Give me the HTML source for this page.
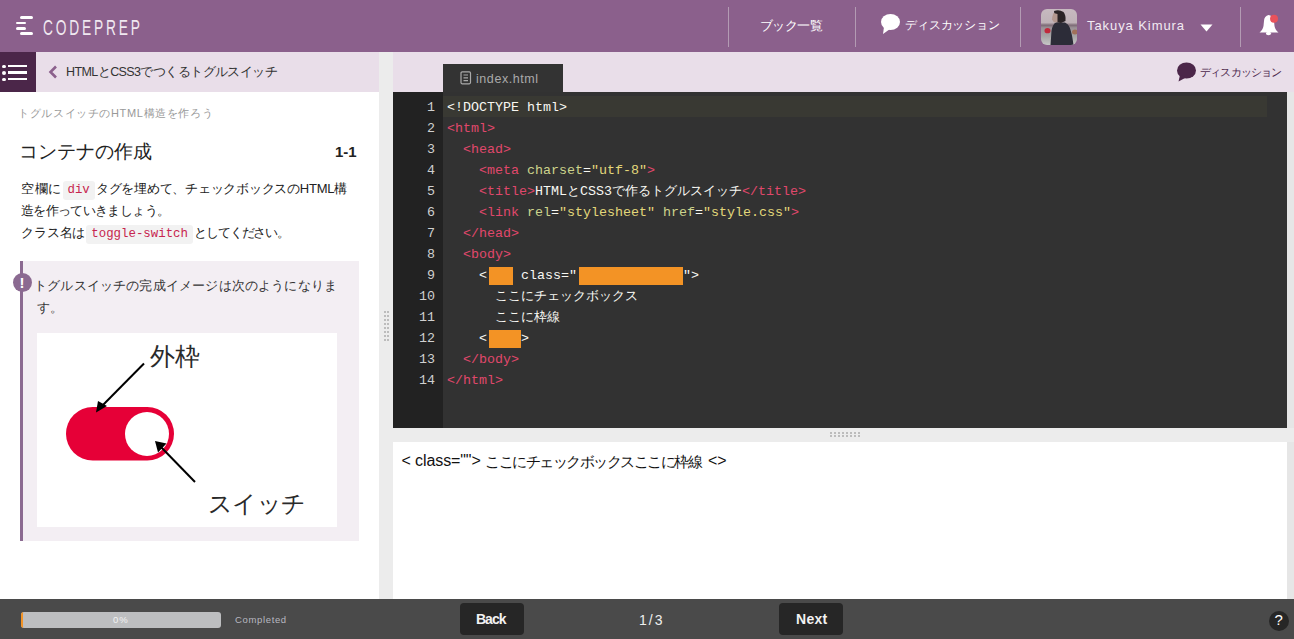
<!DOCTYPE html>
<html><head><meta charset="utf-8">
<style>
*{box-sizing:border-box;margin:0;padding:0}
html,body{width:1294px;height:639px;overflow:hidden;background:#fff;font-family:"Liberation Sans",sans-serif;position:relative}
.abs{position:absolute}
#hdr{left:0;top:0;width:1294px;height:52px;background:#8b608c}
#sub{left:0;top:52px;width:379px;height:40px;background:#e9dee9}
#ham{left:0;top:52px;width:36px;height:40px;background:#4b2649}
#left{left:0;top:92px;width:379px;height:507px;background:#fff}
#lstrip{left:379px;top:52px;width:14px;height:547px;background:#ececec}
#rsub{left:393px;top:52px;width:901px;height:40px;background:#e9dee9}
#editor{left:393px;top:92px;width:894px;height:336px;background:#323232}
#gutter{left:393px;top:92px;width:50px;height:336px;background:#222}
#hl{left:443px;top:96px;width:824px;height:21px;background:#393933}
#rstrip{left:1287px;top:92px;width:7px;height:507px;background:#e6e6e6}
#hsplit{left:393px;top:428px;width:901px;height:14px;background:#ececec}
#outp{left:393px;top:442px;width:894px;height:157px;background:#fff}
#ftr{left:0;top:599px;width:1294px;height:40px;background:#4a4a4a}
.sep{position:absolute;top:7px;width:1px;height:40px;background:#b39bb3}
.code{font-family:"Liberation Mono",monospace;font-size:13.333px;line-height:21px;white-space:pre;color:#f8f8f2}
.ln{position:absolute;left:393px;width:43px;text-align:right;color:#d0d0d0}
.t{color:#e0486c}
.a{color:#cdd48c}
.v{color:#e3d77a}
.txt{font-size:13px;line-height:22px;color:#222;white-space:nowrap}
.chip{letter-spacing:0;position:relative;top:1px;display:inline-block;background:#f2f2f2;border-radius:3px;padding:0 5px;margin:0 1px;height:19px;line-height:19px;font-family:"Liberation Mono",monospace;font-size:12.4px;color:#c7254e;vertical-align:top;margin-top:2px}
.ob{display:inline-block;background:#f39325;height:18px;vertical-align:top;margin-top:2px}
</style></head><body>
<div id="hdr" class="abs"></div>
<!-- logo -->
<div class="abs" style="left:20px;top:16px;width:13px;height:2.5px;background:#fff;border-radius:2px"></div>
<div class="abs" style="left:16px;top:21.5px;width:10px;height:2.5px;background:#fff;border-radius:2px"></div>
<div class="abs" style="left:16px;top:27px;width:10px;height:2.5px;background:#fff;border-radius:2px"></div>
<div class="abs" style="left:20px;top:32.2px;width:13px;height:2.5px;background:#fff;border-radius:2px"></div>
<div id="logo_t" class="abs" style="left:43px;top:15.5px;font-size:21.5px;line-height:24px;color:#f0e8f0;letter-spacing:4.4px;transform:scaleX(0.64);transform-origin:0 0">CODEPREP</div>

<div class="sep" style="left:728px"></div>
<div id="books" class="abs" style="left:760px;top:17px;font-size:13px;letter-spacing:-0.55px;color:#fff;line-height:18px;white-space:nowrap">ブック一覧</div>
<div class="sep" style="left:855px"></div>
<svg class="abs" style="left:880px;top:13px" width="21" height="22" viewBox="0 0 21 22"><ellipse cx="10.5" cy="9" rx="9.5" ry="8" fill="#fff"/><path d="M4 14 L3 21 L10 16 Z" fill="#fff"/></svg>
<div id="disc" class="abs" style="left:905px;top:16px;font-size:12px;letter-spacing:-0.15px;color:#fff;line-height:18px;white-space:nowrap">ディスカッション</div>
<div class="sep" style="left:1020px"></div>
<svg class="abs" style="left:1041px;top:9px" width="36" height="36" viewBox="0 0 36 36"><defs><clipPath id="ac"><rect width="36" height="36" rx="6"/></clipPath><linearGradient id="ag" x1="0" y1="0" x2="0" y2="1"><stop offset="0" stop-color="#c7bac0"/><stop offset="0.38" stop-color="#bfb2b8"/><stop offset="0.45" stop-color="#7d6b76"/><stop offset="0.52" stop-color="#9a9096"/><stop offset="0.75" stop-color="#a7a5a6"/><stop offset="1" stop-color="#c6c6c6"/></linearGradient></defs><g clip-path="url(#ac)">
<rect width="36" height="36" fill="url(#ag)"/>
<ellipse cx="6.5" cy="21.7" rx="3" ry="2.6" fill="#c02a3c"/>
<ellipse cx="34" cy="23" rx="3" ry="2.5" fill="#a0705a"/>
<path d="M9.5 36 L10.5 22 Q11.5 15 15 13.5 L24 13.5 Q27.5 15 28.5 18 Q31 24 32.5 36 Z" fill="#2c2c38"/>
<path d="M13 2 Q18 0 22.5 3 Q25 6 24.5 12 L20 14 L14.5 13 Z" fill="#2a2326"/>
<path d="M12.5 4 Q11 8 11 10.5 L13 13.5 L16.5 13 L16.5 5 Z" fill="#b39890"/>
</g></svg>
<div id="name" class="abs" style="left:1087px;top:16.5px;font-size:13px;color:#f2eaf2;line-height:18px;letter-spacing:0.92px;white-space:nowrap">Takuya Kimura</div>
<svg class="abs" style="left:1200px;top:24px" width="13" height="8"><path d="M0.5 0.5 H12.5 L6.5 7.5 Z" fill="#fff"/></svg>
<div class="sep" style="left:1240px"></div>
<svg class="abs" style="left:1258px;top:13px" width="24" height="24" viewBox="0 0 24 24"><path d="M10.5 2 C8 2.5 6 4.5 6 8 L5.5 13 C5 16 3.5 18 1.5 19.5 L20.5 19.5 C18.5 18 17 16 16.5 13 L16 8 C16 4.5 13 2.5 10.5 2 Z" fill="#fff"/><ellipse cx="10.5" cy="20.5" rx="2.6" ry="1.8" fill="#fff"/><circle cx="16" cy="5.7" r="4" fill="#e9525b"/></svg>

<div id="sub" class="abs"></div>
<div id="ham" class="abs"></div>
<div class="abs" style="left:2px;top:64.5px;width:4px;height:3.5px;border-radius:2px;background:#fff"></div>
<div class="abs" style="left:2px;top:71px;width:4px;height:3.5px;border-radius:2px;background:#fff"></div>
<div class="abs" style="left:2px;top:77.5px;width:4px;height:3.5px;border-radius:2px;background:#fff"></div>
<div class="abs" style="left:8px;top:64.8px;width:19px;height:2.6px;background:#fff"></div>
<div class="abs" style="left:8px;top:71.3px;width:19px;height:2.6px;background:#fff"></div>
<div class="abs" style="left:8px;top:77.8px;width:19px;height:2.6px;background:#fff"></div>
<svg class="abs" style="left:47px;top:65px" width="12" height="14"><path d="M9 1.5 L3.5 7 L9 12.5" fill="none" stroke="#8b608c" stroke-width="2.6"/></svg>
<div id="stitle" class="abs" style="left:66px;top:64px;font-size:12.5px;letter-spacing:-0.58px;line-height:16px;color:#333;white-space:nowrap">HTMLとCSS3でつくるトグルスイッチ</div>

<div id="left" class="abs"></div>
<div id="subt" class="abs" style="left:18px;top:106px;font-size:11px;letter-spacing:0.63px;line-height:14px;color:#999;white-space:nowrap">トグルスイッチのHTML構造を作ろう</div>
<div id="ttl" class="abs" style="left:19px;top:141px;font-size:19px;line-height:22px;color:#222;white-space:nowrap">コンテナの作成</div>
<div id="num" class="abs" style="left:335px;top:143px;font-size:15px;line-height:18px;color:#222;font-weight:bold;white-space:nowrap">1-1</div>
<div id="p1" class="abs txt" style="left:21px;top:178px"><span style="letter-spacing:0.5px">空欄に</span><span class="chip">div</span><span style="letter-spacing:-0.25px">タグを埋めて、チェックボックスのHTML構</span></div>
<div id="p2" class="abs txt" style="left:21px;top:200px;letter-spacing:-0.65px">造を作っていきましょう。</div>
<div id="p3" class="abs txt" style="left:21px;top:222px"><span style="letter-spacing:-0.14px">クラス名は</span><span class="chip">toggle-switch</span><span style="letter-spacing:-1.1px">としてください。</span></div>

<div class="abs" style="left:20px;top:261px;width:339px;height:280px;background:#f3eef3;border-left:3px solid #8b6a91"></div>
<div class="abs" style="left:12.5px;top:272.5px;width:19px;height:19px;border-radius:50%;background:#8b6a91;color:#fff;font-weight:bold;font-size:15px;line-height:19px;text-align:center">!</div>
<div id="n1" class="abs txt" style="left:34px;top:275px;letter-spacing:0.18px;color:#333">トグルスイッチの完成イメージは次のようになりま</div>
<div id="n2" class="abs txt" style="left:37px;top:297px;color:#333">す。</div>
<div class="abs" style="left:37px;top:333px;width:300px;height:194px;background:#fff">
  <svg class="abs" style="left:0;top:0" width="300" height="194" viewBox="0 0 300 194">
    <rect x="29" y="74" width="108" height="53.5" rx="26.75" fill="#e60037"/>
    <circle cx="110" cy="101" r="22" fill="#fff"/>
    <line x1="107" y1="30.5" x2="63" y2="75" stroke="#000" stroke-width="2"/>
    <path d="M59 79.5 L61 68 L70 73 Z" fill="#000"/>
    <line x1="158" y1="149" x2="122" y2="112" stroke="#000" stroke-width="2"/>
    <path d="M118 108 L129.5 110.5 L121 119.5 Z" fill="#000"/>
  </svg>
  <div id="lbl1" class="abs" style="left:113px;top:8px;font-size:25px;line-height:30px;color:#2a2a2a;white-space:nowrap">外枠</div>
  <div id="lbl2" class="abs" style="left:171px;top:156px;font-size:24px;line-height:30px;color:#2a2a2a;letter-spacing:-0.6px;white-space:nowrap">スイッチ</div>
</div>

<div id="lstrip" class="abs"></div>
<div id="rsub" class="abs"></div>
<div class="abs" style="left:443px;top:64px;width:120px;height:28px;background:#333"></div>
<svg class="abs" style="left:460px;top:71px" width="12" height="14"><rect x="1" y="0.8" width="9.5" height="12" rx="1.2" fill="none" stroke="#aaa" stroke-width="1.2"/><path d="M3.5 4 H8 M3.5 6.8 H8 M3.5 9.6 H8" stroke="#aaa" stroke-width="1.2"/></svg>
<div id="tabt" class="abs" style="left:476px;top:71px;font-size:12.5px;line-height:16px;color:#aaa;letter-spacing:0.57px">index.html</div>
<svg class="abs" style="left:1176px;top:62px" width="21" height="20" viewBox="0 0 21 20"><ellipse cx="10.5" cy="8.5" rx="9.5" ry="8" fill="#4b2649"/><path d="M4 13 L2.5 19.5 L10 15.5 Z" fill="#4b2649"/></svg>
<div id="rdisc" class="abs" style="left:1200px;top:64px;font-size:11px;letter-spacing:-0.8px;line-height:16px;color:#4b2649;white-space:nowrap">ディスカッション</div>

<div id="editor" class="abs"></div>
<div id="gutter" class="abs"></div>
<div id="hl" class="abs"></div>
<div class="code ln" style="top:97px;width:42px"><span id="l1">1</span>
2
3
4
5
6
7
8
9
10
11
12
13
14</div>
<div class="code abs" style="left:447px;top:97px"><span id="c1">&lt;!DOCTYPE html&gt;</span>
<span class="t">&lt;html&gt;</span>
  <span class="t">&lt;head&gt;</span>
    <span class="t">&lt;meta</span> <span class="a">charset</span>=<span class="v">"utf-8"</span><span class="t">&gt;</span>
    <span class="t">&lt;title&gt;</span>HTMLとCSS3で作るトグルスイッチ<span class="t">&lt;/title&gt;</span>
    <span class="t">&lt;link</span> <span class="a">rel</span>=<span class="v">"stylesheet"</span> <span class="a">href</span>=<span class="v">"style.css"</span><span class="t">&gt;</span>
  <span class="t">&lt;/head&gt;</span>
  <span class="t">&lt;body&gt;</span>
    &lt;<span class="ob" style="width:24px;margin-left:2px"></span> class="<span class="ob" style="width:104px;margin-left:2px"></span>"&gt;
      ここにチェックボックス
      ここに枠線
    &lt;<span class="ob" style="width:32px;margin-left:2px"></span>&gt;
  <span class="t">&lt;/body&gt;</span>
<span class="t">&lt;/html&gt;</span></div>

<div id="rstrip" class="abs"></div>
<div id="hsplit" class="abs"></div>
<div id="outp" class="abs"></div>
<div class="abs" style="left:384px;top:311px;width:2px;height:2px;background:#bcbcbc"></div><div class="abs" style="left:387px;top:311px;width:2px;height:2px;background:#bcbcbc"></div><div class="abs" style="left:384px;top:315px;width:2px;height:2px;background:#bcbcbc"></div><div class="abs" style="left:387px;top:315px;width:2px;height:2px;background:#bcbcbc"></div><div class="abs" style="left:384px;top:319px;width:2px;height:2px;background:#bcbcbc"></div><div class="abs" style="left:387px;top:319px;width:2px;height:2px;background:#bcbcbc"></div><div class="abs" style="left:384px;top:323px;width:2px;height:2px;background:#bcbcbc"></div><div class="abs" style="left:387px;top:323px;width:2px;height:2px;background:#bcbcbc"></div><div class="abs" style="left:384px;top:327px;width:2px;height:2px;background:#bcbcbc"></div><div class="abs" style="left:387px;top:327px;width:2px;height:2px;background:#bcbcbc"></div><div class="abs" style="left:384px;top:331px;width:2px;height:2px;background:#bcbcbc"></div><div class="abs" style="left:387px;top:331px;width:2px;height:2px;background:#bcbcbc"></div><div class="abs" style="left:384px;top:335px;width:2px;height:2px;background:#bcbcbc"></div><div class="abs" style="left:387px;top:335px;width:2px;height:2px;background:#bcbcbc"></div><div class="abs" style="left:384px;top:339px;width:2px;height:2px;background:#bcbcbc"></div><div class="abs" style="left:387px;top:339px;width:2px;height:2px;background:#bcbcbc"></div><div class="abs" style="left:830px;top:432px;width:2px;height:2px;background:#bcbcbc"></div><div class="abs" style="left:830px;top:435px;width:2px;height:2px;background:#bcbcbc"></div><div class="abs" style="left:834px;top:432px;width:2px;height:2px;background:#bcbcbc"></div><div class="abs" style="left:834px;top:435px;width:2px;height:2px;background:#bcbcbc"></div><div class="abs" style="left:838px;top:432px;width:2px;height:2px;background:#bcbcbc"></div><div class="abs" style="left:838px;top:435px;width:2px;height:2px;background:#bcbcbc"></div><div class="abs" style="left:842px;top:432px;width:2px;height:2px;background:#bcbcbc"></div><div class="abs" style="left:842px;top:435px;width:2px;height:2px;background:#bcbcbc"></div><div class="abs" style="left:846px;top:432px;width:2px;height:2px;background:#bcbcbc"></div><div class="abs" style="left:846px;top:435px;width:2px;height:2px;background:#bcbcbc"></div><div class="abs" style="left:850px;top:432px;width:2px;height:2px;background:#bcbcbc"></div><div class="abs" style="left:850px;top:435px;width:2px;height:2px;background:#bcbcbc"></div><div class="abs" style="left:854px;top:432px;width:2px;height:2px;background:#bcbcbc"></div><div class="abs" style="left:854px;top:435px;width:2px;height:2px;background:#bcbcbc"></div><div class="abs" style="left:858px;top:432px;width:2px;height:2px;background:#bcbcbc"></div><div class="abs" style="left:858px;top:435px;width:2px;height:2px;background:#bcbcbc"></div>
<div id="out_a" class="abs" style="left:401.5px;top:452px;font-size:16px;line-height:18px;color:#111;white-space:nowrap;letter-spacing:-0.1px">&lt; class=""&gt;</div>
<div id="out_b" class="abs" style="left:485px;top:453px;font-size:15px;line-height:18px;color:#111;white-space:nowrap;letter-spacing:-1.5px">ここにチェックボックスここに枠線</div>
<div id="out_c" class="abs" style="left:708px;top:452px;font-size:16px;line-height:18px;color:#111;white-space:nowrap">&lt;&gt;</div>

<div id="ftr" class="abs"></div>
<div class="abs" style="left:21px;top:612px;width:200px;height:16px;border-radius:3px;background:#bdbec0;overflow:hidden"><div style="width:2px;height:16px;background:#f39325"></div></div>
<div id="pct" class="abs" style="left:113px;top:614px;font-size:9.5px;line-height:12px;color:#f2f2f2;letter-spacing:1px">0%</div>
<div id="cmp" class="abs" style="left:235px;top:614px;font-size:9.5px;line-height:12px;color:#b8b8c0;letter-spacing:0.65px">Completed</div>
<div class="abs" style="left:460px;top:603px;width:64px;height:32px;border-radius:4px;background:#262626"></div><div id="backt" class="abs" style="left:476px;top:609px;color:#f2f2f2;font-weight:bold;font-size:14px;line-height:20px;letter-spacing:-1px">Back</div>
<div id="page" class="abs" style="left:639px;top:612px;font-size:14px;line-height:16px;color:#eee;letter-spacing:2px">1/3</div>
<div class="abs" style="left:779px;top:603px;width:64px;height:32px;border-radius:4px;background:#262626"></div><div id="nextt" class="abs" style="left:796px;top:609px;color:#f2f2f2;font-weight:bold;font-size:14px;line-height:20px;letter-spacing:0.3px">Next</div>
<div class="abs" style="left:1269px;top:611px;width:20px;height:20px;border-radius:50%;background:#262626"></div><div id="help" class="abs" style="left:1274.5px;top:611px;color:#fff;font-size:15px;line-height:18px">?</div>
</body></html>
